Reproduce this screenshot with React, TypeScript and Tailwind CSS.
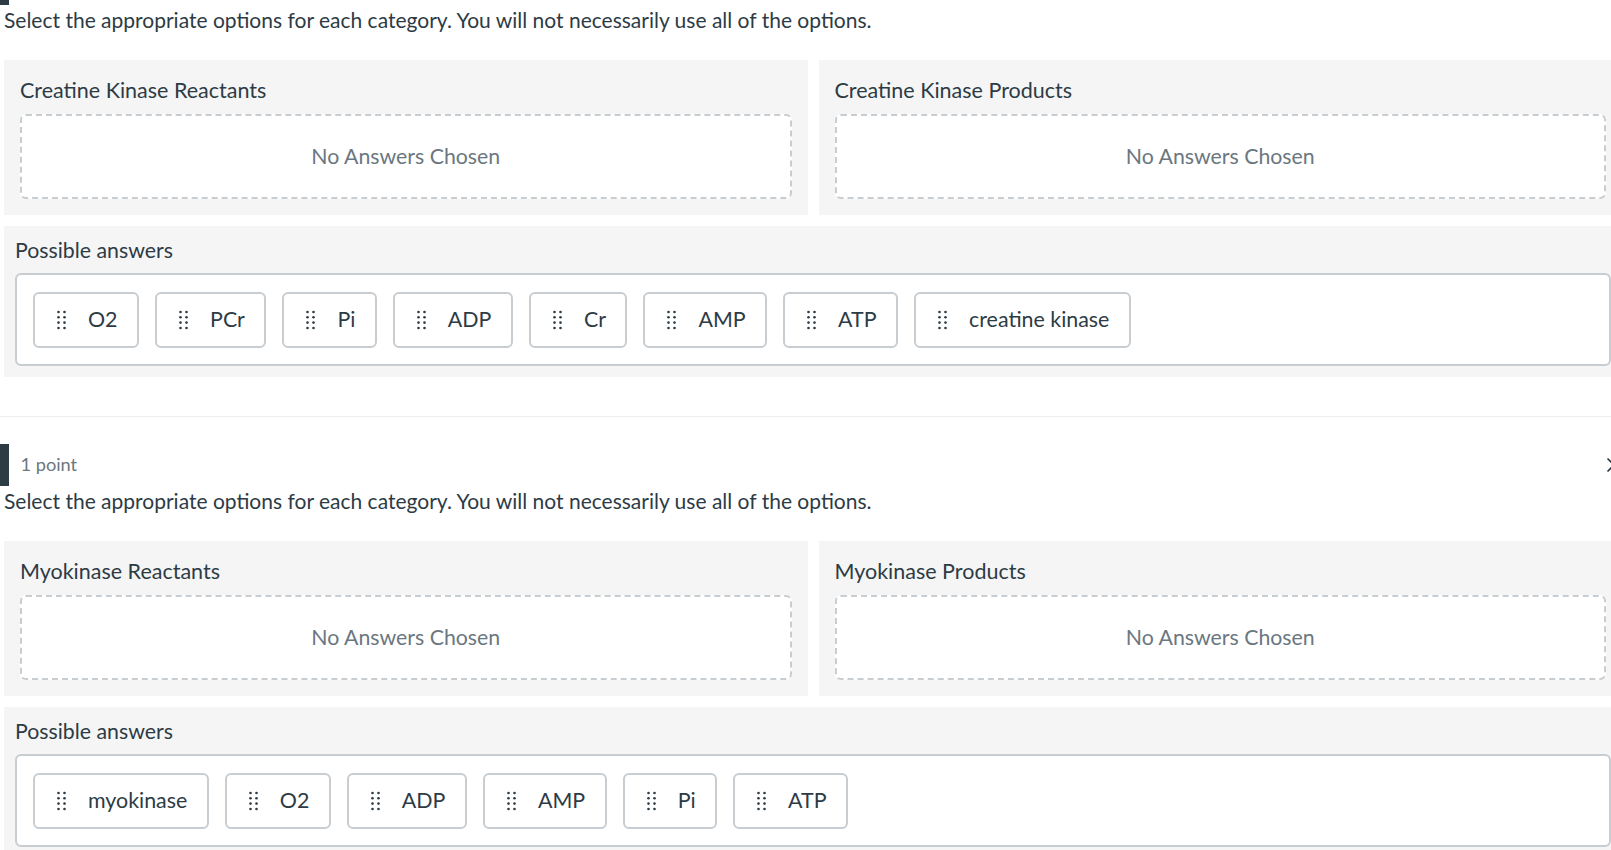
import React from "react";

const DragHandle = () => (
  <svg width="9" height="20" viewBox="0 0 9 20" className="shrink-0" fill="#2d3b45">
    <circle cx="1.5" cy="2" r="1.3" />
    <circle cx="7.5" cy="2" r="1.3" />
    <circle cx="1.5" cy="7.3" r="1.3" />
    <circle cx="7.5" cy="7.3" r="1.3" />
    <circle cx="1.5" cy="12.6" r="1.3" />
    <circle cx="7.5" cy="12.6" r="1.3" />
    <circle cx="1.5" cy="18" r="1.3" />
    <circle cx="7.5" cy="18" r="1.3" />
  </svg>
);

const Chip = ({ label }: { label: string }) => (
  <div className="h-[56px] flex items-center border-2 border-[#c7cdd1] rounded-md bg-white pl-[22px] pr-[19.5px] gap-[22px] shrink-0">
    <DragHandle />
    <span className="text-[21.4px] leading-none text-[#2d3b45] whitespace-nowrap">{label}</span>
  </div>
);

const Category = ({ title }: { title: string }) => (
  <div className="bg-[#f5f5f5] p-4">
    <div className="text-[21.5px] leading-[28px] text-[#2d3b45] whitespace-nowrap">{title}</div>
    <div className="mt-[10px] h-[85px] border-2 border-dashed border-[#c7cdd1] rounded-md bg-white flex items-center justify-center">
      <span className="text-[21.3px] text-[#6b7780]">No Answers Chosen</span>
    </div>
  </div>
);

const Question = ({
  left,
  right,
  answers,
}: {
  left: string;
  right: string;
  answers: string[];
}) => (
  <div className="w-[1622px]">
    <div className="h-[42px] flex items-center">
      <div className="w-[9px] h-full bg-[#2d3b45]" />
      <span className="ml-[11.5px] text-[18.2px] text-[#6b7780]">1 point</span>
      <svg
        className="ml-auto"
        width="16"
        height="16"
        viewBox="0 0 16 16"
        fill="none"
        stroke="#2d3b45"
        strokeWidth="1.6"
      >
        <path d="M1.5 1.5 L14.5 14.5 M14.5 1.5 L1.5 14.5" />
      </svg>
    </div>
    <div className="pl-[4px] text-[21px] leading-[30px] text-[#2d3b45] whitespace-nowrap">
      Select the appropriate options for each category. You will not necessarily use all of the options.
    </div>
    <div className="ml-[4px] w-[1618px] mt-[25px]">
      <div className="grid grid-cols-2 gap-[11px]">
        <Category title={left} />
        <Category title={right} />
      </div>
      <div className="mt-[11px] bg-[#f5f5f5] pt-[10px] px-[11px] pb-[11px]">
        <div className="text-[21.3px] leading-[28px] text-[#2d3b45]">Possible answers</div>
        <div className="mt-[9px] border-2 border-[#c7cdd1] rounded-md bg-white pt-[17px] pb-[16px] px-[16px] flex gap-[16px]">
          {answers.map((a) => (
            <Chip key={a} label={a} />
          ))}
        </div>
      </div>
    </div>
  </div>
);

export default function App() {
  return (
    <div
      className="w-[1611px] h-[850px] overflow-hidden bg-white"
      style={{ fontFamily: "Lato, 'Noto Sans', sans-serif" }}
    >
      <div className="-mt-[37px]">
        <Question
          left="Creatine Kinase Reactants"
          right="Creatine Kinase Products"
          answers={["O2", "PCr", "Pi", "ADP", "Cr", "AMP", "ATP", "creatine kinase"]}
        />
        <div className="mt-[39px] mb-[27px] h-px w-[1622px] bg-[#eeeeee]" />
        <Question
          left="Myokinase Reactants"
          right="Myokinase Products"
          answers={["myokinase", "O2", "ADP", "AMP", "Pi", "ATP"]}
        />
      </div>
    </div>
  );
}
